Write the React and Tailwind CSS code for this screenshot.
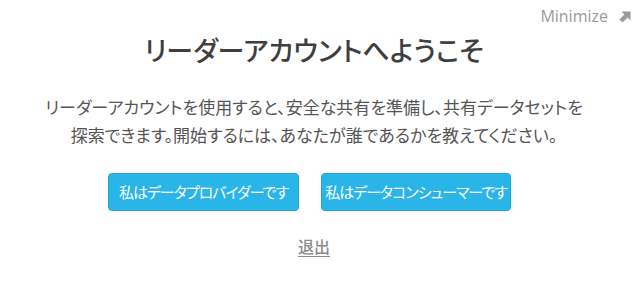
import React from "react";

const jp = { fontFamily: '"Noto Sans CJK JP", "Noto Sans", sans-serif' };

export default function App() {
  return (
    <div className="w-[640px] h-[282px] bg-white relative overflow-hidden" style={jp}>
      <div className="flex justify-end items-center pt-[5px] pr-[9px] gap-[11px] text-[#9a9a9a]">
        <span className="text-[16px] leading-[22px]" style={{ fontFamily: '"Open Sans", "Noto Sans", sans-serif' }}>Minimize</span>
        <svg width="12" height="12" viewBox="0 0 12 12" className="mt-[2px]">
          <path d="M2.5 0.5 H11.5 V9.5 L8.6 6.6 L3.6 11.6 L0.4 8.4 L5.4 3.4 Z" fill="#9a9a9a" />
        </svg>
      </div>
      <div className="flex flex-col items-center pr-[12px]">
        <h1 className="mt-[5px] text-[27px] leading-[36px] font-medium text-[#3f3f3f] [font-feature-settings:'palt']">
          リーダーアカウントへようこそ
        </h1>
        <p className="mt-[25px] text-center text-[17px] leading-[28px] text-[#555] [font-feature-settings:'palt']">
          リーダーアカウントを使用すると、安全な共有を準備し、共有データセットを
          <br />
          探索できます。開始するには、あなたが誰であるかを教えてください。
        </p>
        <div className="mt-[24px] mr-[9px] flex gap-[22px]">
          <button className="w-[191px] h-[38px] rounded-[4px] bg-[#29b5e8] border border-[#22a5d6] text-white text-[15px] tracking-[-1px] whitespace-nowrap [font-feature-settings:'palt']">
            私はデータプロバイダーです
          </button>
          <button className="w-[190px] h-[38px] rounded-[4px] bg-[#29b5e8] border border-[#22a5d6] text-white text-[15px] tracking-[-1px] whitespace-nowrap [font-feature-settings:'palt']">
            私はデータコンシューマーです
          </button>
        </div>
        <a className="mt-[25px] text-[16px] leading-[20px] font-medium text-[#8a8a8a] underline underline-offset-[3px]">
          退出
        </a>
      </div>
    </div>
  );
}
